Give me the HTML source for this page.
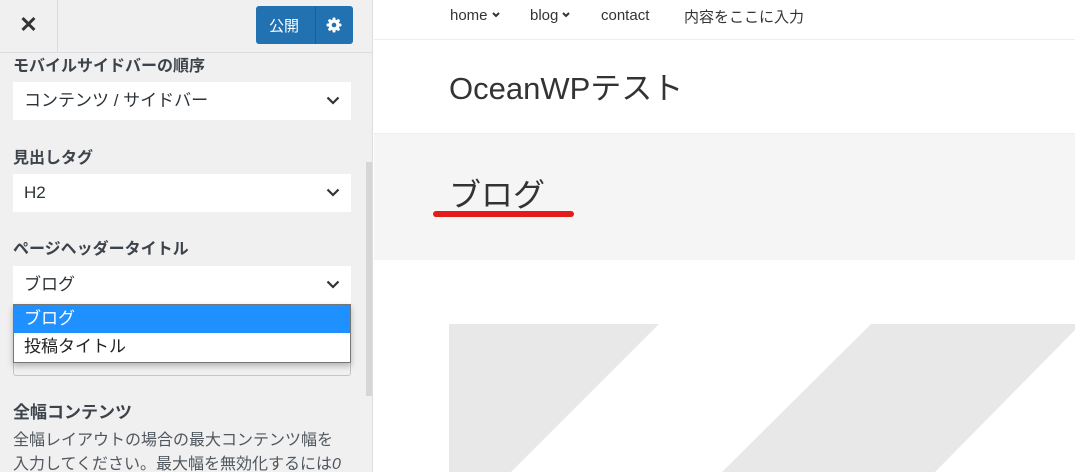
<!DOCTYPE html>
<html><head><meta charset="utf-8"><style>
*{box-sizing:border-box;margin:0;padding:0}
body{width:1075px;height:472px;overflow:hidden;position:relative;font-family:"Liberation Sans","Noto Sans CJK JP",sans-serif;background:#fff}
.side{position:absolute;left:0;top:0;width:373px;height:472px;background:#f0f0f1;border-right:1px solid #ddd;overflow:hidden}
.top{position:absolute;left:0;top:0;width:372px;height:53px;border-bottom:1px solid #dcdcde}
.close{position:absolute;left:0;top:0;width:58px;height:52px;border-right:1px solid #dcdcde;font-size:22px;color:#333;text-align:center;line-height:50px;font-weight:bold}
.pub{position:absolute;left:256px;top:6px;width:97px;height:38px;background:#2271b1;border-radius:3px;color:#fff}
.pub span{position:absolute;left:13px;top:9px;font-size:15px}
.pub i{position:absolute;left:59px;top:0;width:1px;height:38px;background:#1d5f95}
.lab{position:absolute;left:13px;font-size:16px;font-weight:bold;color:#3c434a}
.sel{position:absolute;left:13px;width:338px;height:38px;background:#fff;font-size:17px;color:#2c3338;padding-left:11px;line-height:38px}
.sel svg{position:absolute;right:11px;top:14px}
.dd{position:absolute;left:13px;top:304px;width:338px;height:59px;background:#fff;border:1px solid #767676;box-shadow:0 3px 6px rgba(0,0,0,.25);font-size:17px;color:#222}
.dd div{height:28px;line-height:27px;padding-left:10px}
.scroll{position:absolute;left:366px;top:162px;width:6px;height:234px;background:#d6d6d6}
.nav span{position:absolute;top:7px}
.nav svg{margin-left:4px;vertical-align:2px}
</style></head><body>
<div class="side">
<div class="top"><div class="close">✕</div>
<div class="pub"><span>公開</span><i></i>
<svg style="position:absolute;left:70px;top:11px" width="16" height="16" viewBox="0 0 16 16"><g fill="#fff"><circle cx="8" cy="8" r="5.5"/><rect x="6.5" y="0.5" width="3" height="15" rx="1"/><rect x="0.5" y="6.5" width="15" height="3" rx="1"/><rect x="6.5" y="0.5" width="3" height="15" rx="1" transform="rotate(45 8 8)"/><rect x="6.5" y="0.5" width="3" height="15" rx="1" transform="rotate(-45 8 8)"/></g><circle cx="8" cy="8" r="2.3" fill="#2271b1"/></svg></div></div>
<div class="lab" style="top:52px">モバイルサイドバーの順序</div>
<div class="sel" style="top:82px">コンテンツ / サイドバー<svg width="14" height="9" viewBox="0 0 14 9"><path d="M1.5 1.5 7 7l5.5-5.5" fill="none" stroke="#333" stroke-width="2.2"/></svg></div>
<div class="lab" style="top:144px">見出しタグ</div>
<div class="sel" style="top:174px">H2<svg width="14" height="9" viewBox="0 0 14 9"><path d="M1.5 1.5 7 7l5.5-5.5" fill="none" stroke="#333" stroke-width="2.2"/></svg></div>
<div class="lab" style="top:235px">ページヘッダータイトル</div>
<div class="sel" style="top:266px">ブログ<svg width="14" height="9" viewBox="0 0 14 9"><path d="M1.5 1.5 7 7l5.5-5.5" fill="none" stroke="#333" stroke-width="2.2"/></svg></div>
<div style="position:absolute;left:13px;top:340px;width:338px;height:36px;border:1px solid #c3c4c7;border-radius:3px"></div>
<div class="dd"><div style="background:#1e90ff;color:#fff">ブログ</div><div>投稿タイトル</div></div>
<div class="lab" style="top:398px;font-size:17px">全幅コンテンツ</div>
<div style="position:absolute;left:13px;top:429px;width:334px;font-size:16px;line-height:24px;color:#50575e">全幅レイアウトの場合の最大コンテンツ幅を入力してください。最大幅を無効化するには<i>0</i></div>
<div class="scroll"></div>
</div>
<div class="nav" style="position:absolute;left:374px;top:0;width:701px;height:40px;border-bottom:1px solid #eee;font-size:15px;color:#333">
<span style="left:76px">home<svg width="8" height="6" viewBox="0 0 8 6"><path d="M1 1l3 3 3-3" fill="none" stroke="#333" stroke-width="2"/></svg></span>
<span style="left:156px">blog<svg width="8" height="6" viewBox="0 0 8 6"><path d="M1 1l3 3 3-3" fill="none" stroke="#333" stroke-width="2"/></svg></span>
<span style="left:227px">contact</span>
<span style="left:310px;top:6px">内容をここに入力</span></div>
<div style="position:absolute;left:449px;top:63px;font-size:31px;color:#333">OceanWPテスト</div>
<div style="position:absolute;left:374px;top:133px;width:701px;height:127px;background:#f5f5f5;border-top:1px solid #eee"></div>
<div style="position:absolute;left:449px;top:175px;font-size:32px;color:#333;line-height:40px">ブログ</div>
<div style="position:absolute;left:433px;top:211px;width:141px;height:6px;background:#e41b1b;border-radius:3px"></div>
<svg style="position:absolute;left:0;top:0" width="1075" height="472"><polygon points="449,324 659,324 511,472 449,472" fill="#e9e8e9"/><polygon points="871,324 1075,324 1075,330 935,472 722,472" fill="#e9e8e9"/></svg>
</body></html>
